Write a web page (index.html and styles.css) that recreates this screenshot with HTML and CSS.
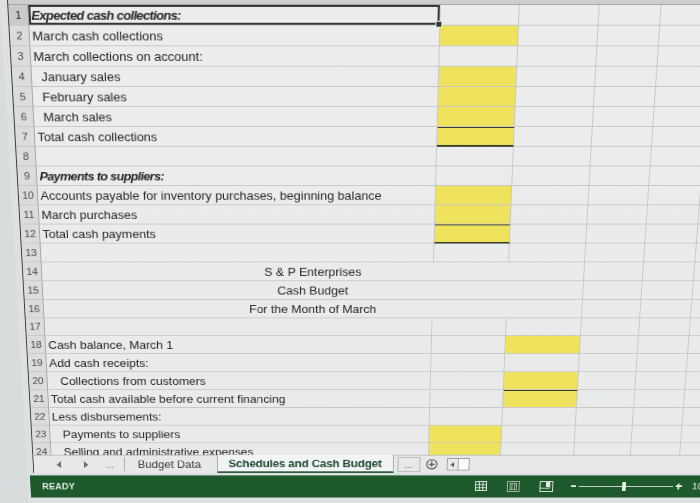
FILE: index.html
```html
<!DOCTYPE html>
<html>
<head>
<meta charset="utf-8">
<link rel="stylesheet" href="styles.css">
</head>
<body>
<div class="screen">
  <div class="sheet">
    <div class="colhead"></div>
    <div class="row"><div class="rh on">1</div><div class="ca bi selcell">Expected cash collections:</div><div class="cb"></div><div class="cc"></div><div class="cd"></div><div class="ce"></div><div class="cf"></div></div>
    <div class="row"><div class="rh">2</div><div class="ca">March cash collections</div><div class="cb y"></div><div class="cc"></div><div class="cd"></div><div class="ce"></div><div class="cf"></div></div>
    <div class="row"><div class="rh">3</div><div class="ca">March collections on account:</div><div class="cb"></div><div class="cc"></div><div class="cd"></div><div class="ce"></div><div class="cf"></div></div>
    <div class="row"><div class="rh">4</div><div class="ca in1">January sales</div><div class="cb y"></div><div class="cc"></div><div class="cd"></div><div class="ce"></div><div class="cf"></div></div>
    <div class="row"><div class="rh">5</div><div class="ca in1">February sales</div><div class="cb y"></div><div class="cc"></div><div class="cd"></div><div class="ce"></div><div class="cf"></div></div>
    <div class="row"><div class="rh">6</div><div class="ca in1">March sales</div><div class="cb y"></div><div class="cc"></div><div class="cd"></div><div class="ce"></div><div class="cf"></div></div>
    <div class="row"><div class="rh">7</div><div class="ca">Total cash collections</div><div class="cb y bt bb2"></div><div class="cc"></div><div class="cd"></div><div class="ce"></div><div class="cf"></div></div>
    <div class="row"><div class="rh">8</div><div class="ca"></div><div class="cb"></div><div class="cc"></div><div class="cd"></div><div class="ce"></div><div class="cf"></div></div>
    <div class="row"><div class="rh">9</div><div class="ca bi">Payments to suppliers:</div><div class="cb"></div><div class="cc"></div><div class="cd"></div><div class="ce"></div><div class="cf"></div></div>
    <div class="row"><div class="rh">10</div><div class="ca">Accounts payable for inventory purchases, beginning balance</div><div class="cb y"></div><div class="cc"></div><div class="cd"></div><div class="ce"></div><div class="cf"></div></div>
    <div class="row"><div class="rh">11</div><div class="ca">March purchases</div><div class="cb y"></div><div class="cc"></div><div class="cd"></div><div class="ce"></div><div class="cf"></div></div>
    <div class="row"><div class="rh">12</div><div class="ca">Total cash payments</div><div class="cb y bt bb2"></div><div class="cc"></div><div class="cd"></div><div class="ce"></div><div class="cf"></div></div>
    <div class="row"><div class="rh">13</div><div class="ca"></div><div class="cb"></div><div class="cc"></div><div class="cd"></div><div class="ce"></div><div class="cf"></div></div>
    <div class="row"><div class="rh">14</div><div class="ca merged">S &amp; P Enterprises</div><div class="cd"></div><div class="ce"></div><div class="cf"></div></div>
    <div class="row"><div class="rh">15</div><div class="ca merged">Cash Budget</div><div class="cd"></div><div class="ce"></div><div class="cf"></div></div>
    <div class="row"><div class="rh">16</div><div class="ca merged">For the Month of March</div><div class="cd"></div><div class="ce"></div><div class="cf"></div></div>
    <div class="row"><div class="rh">17</div><div class="ca"></div><div class="cb"></div><div class="cc"></div><div class="cd"></div><div class="ce"></div><div class="cf"></div></div>
    <div class="row"><div class="rh">18</div><div class="ca">Cash balance, March 1</div><div class="cb"></div><div class="cc y"></div><div class="cd"></div><div class="ce"></div><div class="cf"></div></div>
    <div class="row"><div class="rh">19</div><div class="ca">Add cash receipts:</div><div class="cb"></div><div class="cc"></div><div class="cd"></div><div class="ce"></div><div class="cf"></div></div>
    <div class="row"><div class="rh">20</div><div class="ca in2">Collections from customers</div><div class="cb"></div><div class="cc y"></div><div class="cd"></div><div class="ce"></div><div class="cf"></div></div>
    <div class="row"><div class="rh">21</div><div class="ca">Total cash available before current financing</div><div class="cb"></div><div class="cc y bt"></div><div class="cd"></div><div class="ce"></div><div class="cf"></div></div>
    <div class="row"><div class="rh">22</div><div class="ca">Less disbursements:</div><div class="cb"></div><div class="cc"></div><div class="cd"></div><div class="ce"></div><div class="cf"></div></div>
    <div class="row"><div class="rh">23</div><div class="ca in2">Payments to suppliers</div><div class="cb y"></div><div class="cc"></div><div class="cd"></div><div class="ce"></div><div class="cf"></div></div>
    <div class="row"><div class="rh">24</div><div class="ca in2">Selling and administrative expenses</div><div class="cb y"></div><div class="cc"></div><div class="cd"></div><div class="ce"></div><div class="cf"></div></div>
  </div>

  <div class="tabbar">
    <span class="nav prev"><svg width="6" height="8" viewBox="0 0 6 8"><path d="M5 0L0 4L5 8Z" fill="#6a6a6a"/></svg></span>
    <span class="nav next"><svg width="6" height="8" viewBox="0 0 6 8"><path d="M0 0L5 4L0 8Z" fill="#6a6a6a"/></svg></span>
    <span class="dots">...</span>
    <span class="sep"></span>
    <span class="tab">Budget Data</span>
    <span class="tab active">Schedules and Cash Budget</span>
    <span class="more">...</span>
    <span class="add"><svg width="13" height="13" viewBox="0 0 13 13"><circle cx="6.5" cy="6.5" r="5.6" fill="none" stroke="#555" stroke-width="1.2"/><path d="M6.5 3.3v6.4M3.3 6.5h6.4" stroke="#555" stroke-width="1.4"/></svg></span>
    <span class="hscroll"><span class="hs-btn"><svg width="4" height="6" viewBox="0 0 4 6"><path d="M4 0L0 3L4 6Z" fill="#555"/></svg></span><span class="hs-thumb"></span></span>
  </div>

  <div class="status">
    <span class="ready">READY</span>
    <span class="ico grid"><svg width="13" height="12" viewBox="0 0 13 12"><rect x="0.5" y="0.5" width="12" height="11" fill="none" stroke="#e6eee6"/><path d="M4.5 0.5v11M8.5 0.5v11M0.5 4.2h12M0.5 7.8h12" stroke="#e6eee6"/></svg></span>
    <span class="ico layout"><svg width="14" height="13" viewBox="0 0 14 13"><rect x="0.5" y="0.5" width="13" height="12" fill="none" stroke="#a9b8a9"/><rect x="3.5" y="2.5" width="7" height="8" fill="none" stroke="#a9b8a9"/><path d="M5.5 2.5v8M8.5 2.5v8" stroke="#a9b8a9"/></svg></span>
    <span class="ico pbreak"><svg width="15" height="13" viewBox="0 0 15 13"><rect x="0.5" y="0.5" width="14" height="12" fill="none" stroke="#e6eee6"/><rect x="7" y="1" width="4" height="6" fill="#e6eee6"/><path d="M0.5 8.5h10.5V0.5" fill="none" stroke="#e6eee6"/></svg></span>
    <span class="zminus"></span>
    <span class="zline"><span class="zthumb"></span></span>
    <span class="zplus"></span>
    <span class="zpct">100%</span>
  </div>
</div>
</body>
</html>
```

FILE: styles.css
```css
html, body {
  margin: 0;
  padding: 0;
  height: 100%;
  overflow: hidden;
  background: #d9dcdc;
}

body {
  font-family: "Liberation Sans", Arial, sans-serif;
}

.screen {
  width: 760px;
  height: 580px;
  box-sizing: border-box;
  padding-left: 7px;
  background: #dde1e1;
  display: flex;
  flex-direction: column;
  transform-origin: 300px 0;
  transform: perspective(600px) rotateX(-6.5deg);
}

.sheet {
  height: 501px;
  flex: none;
  overflow: hidden;
  border-left: 1px solid #3c3c3c;
  background: linear-gradient(#ececec, #e8ebea);
}

.colhead {
  height: 5px;
  box-sizing: border-box;
  background: #cfcfcf;
  border-bottom: 1px solid #a8a8a8;
}

.row {
  display: grid;
  grid-template-columns: 20px 413px 79px 80px 62px 54px 1fr;
  height: 20.98px;
}

.row > div {
  box-sizing: border-box;
  border-bottom: 1px solid #c8c8c8;
}

.rh {
  background: #dcdcdc;
  border-right: 1px solid #a6a6a6;
  font-size: 11px;
  color: #4b4b4b;
  display: flex;
  align-items: center;
  justify-content: center;
}

.rh.on {
  background: #c9cbc9;
  color: #222;
}

.ca {
  display: flex;
  align-items: flex-end;
  padding: 0 0 2px 2.5px;
  font-size: 13px;
  line-height: 15px;
  color: #262626;
  white-space: nowrap;
  border-right: 1px solid #c8c8c8;
}

.cb, .cc, .cd, .ce {
  border-right: 1px solid #c8c8c8;
}

.in1 { padding-left: 9.5px; }
.in2 { padding-left: 13.5px; }

.bi {
  font-weight: bold;
  font-style: italic;
  letter-spacing: -0.65px;
}

.merged {
  grid-column: 2 / 5;
  justify-content: center;
  padding-left: 0;
}

.selcell {
  position: relative;
  box-shadow: inset 0 0 0 2px #2e3a32;
}

.selcell::after {
  content: "";
  position: absolute;
  right: -3px;
  bottom: -3px;
  width: 5px;
  height: 5px;
  background: #2e3a32;
  border: 1px solid #f0f0f0;
  z-index: 2;
}

.y { background: #efe35d; }
.bt { border-top: 1px solid #3a3a28; }
.row > .bb2 { border-bottom: 2px solid #3a3a28; }

/* sheet tabs */
.tabbar {
  height: 22px;
  flex: none;
  display: flex;
  align-items: center;
  border-left: 1px solid #3c3c3c;
  background: #e6e9e8;
  border-top: 1px solid #b9bcbb;
  box-sizing: border-box;
  font-size: 12.5px;
  color: #3a3a3a;
}

.nav { display: flex; align-items: center; }
.prev { margin-left: 25px; }
.next { margin-left: 24px; }

.dots {
  margin-left: 18px;
  font-size: 11px;
  color: #777;
  width: 12px;
}

.sep {
  margin-left: 8px;
  width: 1px;
  height: 17px;
  background: #a9aaa9;
}

.tab {
  margin-left: 14px;
  white-space: nowrap;
}

.tab.active {
  margin-left: 17px;
  align-self: stretch;
  width: 194px;
  box-sizing: border-box;
  margin-top: -1px;
  display: flex;
  align-items: center;
  justify-content: center;
  background: #f2f4f3;
  border: 1px solid #a9aba9;
  border-top: none;
  border-bottom: 2px solid #2c5a3c;
  font-weight: bold;
  font-size: 13px;
  letter-spacing: -0.3px;
  color: #1f4a33;
}

.more {
  margin-left: 4px;
  width: 25px;
  height: 18px;
  box-sizing: border-box;
  border: 1px solid #b0b2b1;
  font-size: 11px;
  color: #666;
  display: flex;
  align-items: center;
  justify-content: center;
}

.add {
  margin-left: 6px;
  display: flex;
}

.hscroll {
  margin-left: 10px;
  width: 25px;
  height: 15px;
  box-sizing: border-box;
  border: 1px solid #9ea09f;
  display: flex;
  background: #e9ecea;
}

.hs-btn {
  width: 11px;
  display: flex;
  align-items: center;
  justify-content: center;
  border-right: 1px solid #9ea09f;
}

.hs-thumb {
  flex: 1;
  background: #fafafa;
}

/* status bar */
.status {
  margin-top: 2.5px;
  height: 27px;
  flex: none;
  display: flex;
  align-items: center;
  margin-left: -4px;
  background: #1f5a2d;
  color: #eef3ee;
}

.ready {
  margin-left: 13px;
  font-size: 10px;
  font-weight: bold;
  letter-spacing: 0.2px;
  color: #e4ece4;
}

.ico { display: flex; }
.grid { margin-left: 441px; }
.layout { margin-left: 22px; }
.pbreak { margin-left: 22px; }

.zminus {
  margin-left: 20px;
  width: 5px;
  height: 2px;
  background: #e6eee6;
}

.zline {
  margin-left: 3px;
  width: 104px;
  height: 1px;
  background: #c7d3c7;
  position: relative;
}

.zthumb {
  position: absolute;
  left: 48px;
  top: -5px;
  width: 4px;
  height: 11px;
  background: #e8eee8;
}

.zplus {
  margin-left: 3px;
  width: 7px;
  height: 7px;
  background:
    linear-gradient(#e6eee6, #e6eee6) center / 7px 2px no-repeat,
    linear-gradient(#e6eee6, #e6eee6) center / 2px 7px no-repeat;
}

.zpct {
  margin-left: 11px;
  font-size: 11px;
  color: #e6eee6;
}
```
